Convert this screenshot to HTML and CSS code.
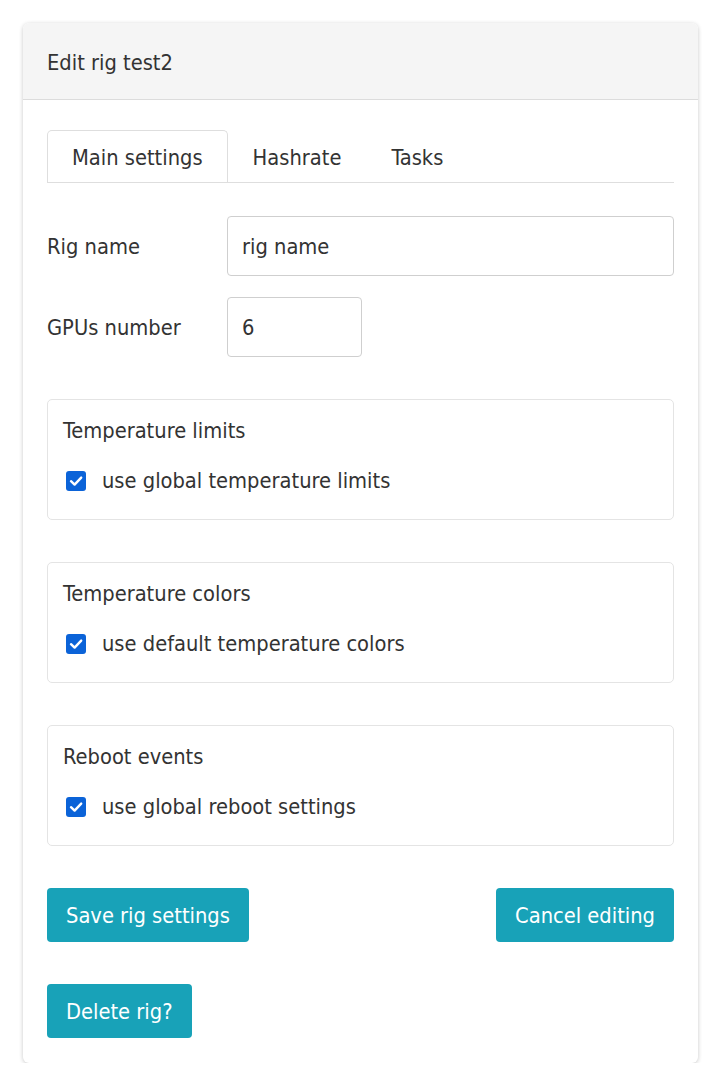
FILE: index.html
```html
<!DOCTYPE html>
<html>
<head>
<meta charset="utf-8">
<title>Edit rig test2</title>
<link rel="stylesheet" href="styles.css">
</head>
<body>
<div class="card">
  <div class="card-header">Edit rig test2</div>
  <div class="card-body">
    <ul class="tabs">
      <li class="tab active">Main settings</li>
      <li class="tab">Hashrate</li>
      <li class="tab">Tasks</li>
    </ul>

    <div class="form-row first">
      <label class="form-label">Rig name</label>
      <div class="input input-wide">rig name</div>
    </div>
    <div class="form-row">
      <label class="form-label">GPUs number</label>
      <div class="input input-narrow">6</div>
    </div>

    <div class="group">
      <div class="group-title">Temperature limits</div>
      <div class="check-row">
        <span class="checkbox"><svg viewBox="0 0 20 20" width="20" height="20"><path d="M5 10.2 L8.6 13.6 L15.2 6.6" fill="none" stroke="#fff" stroke-width="2.4" stroke-linecap="round" stroke-linejoin="round"/></svg></span>
        <span class="check-label">use global temperature limits</span>
      </div>
    </div>

    <div class="group">
      <div class="group-title">Temperature colors</div>
      <div class="check-row">
        <span class="checkbox"><svg viewBox="0 0 20 20" width="20" height="20"><path d="M5 10.2 L8.6 13.6 L15.2 6.6" fill="none" stroke="#fff" stroke-width="2.4" stroke-linecap="round" stroke-linejoin="round"/></svg></span>
        <span class="check-label">use default temperature colors</span>
      </div>
    </div>

    <div class="group">
      <div class="group-title">Reboot events</div>
      <div class="check-row">
        <span class="checkbox"><svg viewBox="0 0 20 20" width="20" height="20"><path d="M5 10.2 L8.6 13.6 L15.2 6.6" fill="none" stroke="#fff" stroke-width="2.4" stroke-linecap="round" stroke-linejoin="round"/></svg></span>
        <span class="check-label">use global reboot settings</span>
      </div>
    </div>

    <div class="actions">
      <button class="btn">Save rig settings</button>
      <button class="btn">Cancel editing</button>
    </div>
    <div class="actions">
      <button class="btn">Delete rig?</button>
    </div>
  </div>
</div>
</body>
</html>
```
FILE: styles.css
```css
html, body {
  margin: 0;
  padding: 0;
  background: #fff;
}
body {
  padding: 23px 22px 0 23px;
  font-family: "DejaVu Sans Condensed", "DejaVu Sans", sans-serif;
  font-size: 21.7px;
  line-height: 32px;
  color: #333;
}
.card {
  background: #fff;
  border-radius: 6px;
  box-shadow: 0 1px 4px rgba(0, 0, 0, 0.22);
  overflow: hidden;
}
.card-header {
  background: #f5f5f5;
  padding: 24px 24px 20px;
  border-bottom: 1px solid #dcdcdc;
}
.card-body {
  padding: 30px 24px 25px;
}
.tabs {
  list-style: none;
  margin: 0;
  padding: 0;
  display: flex;
  border-bottom: 1px solid #dedede;
}
.tab {
  padding: 11px 24px 8px;
  border: 1px solid transparent;
  border-bottom: 0;
  border-radius: 5px 5px 0 0;
}
.tab.active {
  border-color: #dedede;
}
.form-row {
  display: flex;
  align-items: center;
  margin-top: 21px;
}
.form-row.first {
  margin-top: 33px;
}
.form-label {
  width: 180px;
  flex: none;
  padding-top: 2px;
}
.input {
  box-sizing: border-box;
  height: 60px;
  padding: 14px 14px 12px;
  border: 1px solid #cfcfcf;
  border-radius: 4px;
}
.input-wide {
  flex: 1;
}
.input-narrow {
  width: 135px;
}
.group {
  margin-top: 42px;
  border: 1px solid #e4e4e4;
  border-radius: 5px;
  padding: 15px 15px 22px;
}
.group-title {
  margin-bottom: 17px;
}
.check-row {
  display: flex;
  align-items: center;
  padding-left: 3px;
}
.checkbox {
  width: 20px;
  height: 20px;
  border-radius: 3px;
  background: #0b63d8;
  display: inline-flex;
  flex: none;
  margin-right: 16px;
}
.check-label {
  padding-top: 1px;
}
.checkbox svg {
  display: block;
}
.actions {
  display: flex;
  justify-content: space-between;
  margin-top: 42px;
}
.btn {
  font: inherit;
  line-height: 32px;
  color: #fff;
  background: #18a2b8;
  border: 0;
  border-radius: 4px;
  padding: 12px 19px 10px;
  cursor: pointer;
}
```
